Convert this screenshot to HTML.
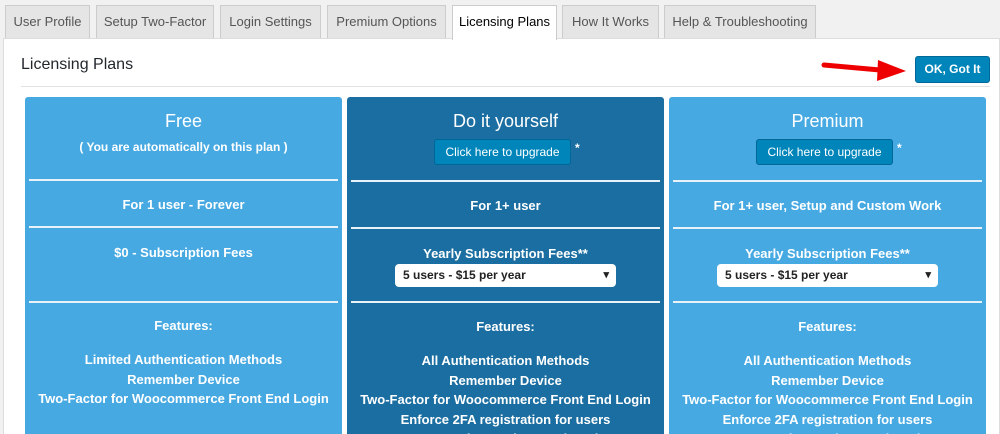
<!DOCTYPE html>
<html><head><meta charset="utf-8"><style>
*{margin:0;padding:0;box-sizing:border-box}
html,body{width:1000px;height:434px;overflow:hidden}
body{background:#f1f1f1;font-family:"Liberation Sans",sans-serif;position:relative}
.tab{position:absolute;top:5px;height:33px;background:#e5e5e5;border:1px solid #ccc;border-bottom:none;font-size:13px;color:#555;line-height:31px;text-align:center}
.tab.a{background:#fff;color:#000;height:35px;z-index:2}
.box{position:absolute;left:3px;top:38px;width:997px;height:396px;background:#fff;border:1px solid #ddd;border-bottom:none}
.t{position:absolute;left:21px;top:56px;font-size:16px;color:#23282d}
.hr{position:absolute;left:21px;top:86px;width:969px;height:1px;background:#e1e1e1}
.btn{position:absolute;background:#0085ba;border:1px solid #006799;color:#fff;font-weight:bold;font-size:12px;text-align:center;border-radius:3px}
.col{position:absolute;top:97px;width:317px;height:337px;border-radius:3px 3px 0 0;color:#fff;font-weight:bold;font-size:13px}
.l{background:#47a9e2}.d{background:#1b6ea1}
.c{position:absolute;left:0;width:100%;text-align:center}
.ln{position:absolute;left:4px;right:4px;height:2px;background:#e8f2f8}
.h{font-size:18px;font-weight:normal}
.sel{position:absolute;left:48px;width:221px;height:23px;background:#fff;border-radius:4px;color:#222;font-size:12px;line-height:23px;padding-left:8px;text-align:left}
.sel:after{content:"▾";position:absolute;right:7px;font-size:11px}
.up{position:absolute;left:87px;top:42px;width:137px;height:26px;line-height:24px;font-weight:normal}
.star{position:absolute;left:228px;top:44px;font-size:12px}
</style></head><body>
<div class="tab" style="left:5px;width:85px">User Profile</div>
<div class="tab" style="left:96px;width:118px">Setup Two-Factor</div>
<div class="tab" style="left:220px;width:101px">Login Settings</div>
<div class="tab" style="left:327px;width:119px">Premium Options</div>
<div class="tab a" style="left:452px;width:105px">Licensing Plans</div>
<div class="tab" style="left:562px;width:97px">How It Works</div>
<div class="tab" style="left:664px;width:152px">Help &amp; Troubleshooting</div>
<div class="box"></div>
<div class="t">Licensing Plans</div>
<div class="hr"></div>
<svg style="position:absolute;left:820px;top:56px" width="90" height="26"><path d="M4 9 L60 14" stroke="#e00" stroke-width="5" stroke-linecap="round"/><path d="M58 4 L86 15 L57 25 Z" fill="#e00"/></svg>
<div class="btn" style="left:915px;top:56px;width:75px;height:27px;line-height:25px">OK, Got It</div>

<div class="col l" style="left:25px">
<div class="c h" style="top:14px">Free</div>
<div class="c" style="top:43px;font-size:12px">( You are automatically on this plan )</div>
<div class="ln" style="top:82px"></div>
<div class="c" style="top:100px">For 1 user - Forever</div>
<div class="ln" style="top:129px"></div>
<div class="c" style="top:148px">$0 - Subscription Fees</div>
<div class="ln" style="top:204px"></div>
<div class="c" style="top:221px">Features:</div>
<div class="c" style="top:253px;line-height:19.5px">Limited Authentication Methods<br>Remember Device<br>Two-Factor for Woocommerce Front End Login</div>
</div>

<div class="col d" style="left:347px">
<div class="c h" style="top:14px">Do it yourself</div>
<div class="btn up">Click here to upgrade</div><div class="star">*</div>
<div class="ln" style="top:83px"></div>
<div class="c" style="top:101px">For 1+ user</div>
<div class="ln" style="top:130px"></div>
<div class="c" style="top:149px">Yearly Subscription Fees**</div>
<div class="sel" style="top:167px">5 users - $15 per year</div>
<div class="ln" style="top:204px"></div>
<div class="c" style="top:222px">Features:</div>
<div class="c" style="top:254px;line-height:19.5px">All Authentication Methods<br>Remember Device<br>Two-Factor for Woocommerce Front End Login<br>Enforce 2FA registration for users<br>Manage Backup and Trusted Devices</div>
</div>

<div class="col l" style="left:669px">
<div class="c h" style="top:14px">Premium</div>
<div class="btn up">Click here to upgrade</div><div class="star">*</div>
<div class="ln" style="top:83px"></div>
<div class="c" style="top:101px">For 1+ user, Setup and Custom Work</div>
<div class="ln" style="top:130px"></div>
<div class="c" style="top:149px">Yearly Subscription Fees**</div>
<div class="sel" style="top:167px">5 users - $15 per year</div>
<div class="ln" style="top:204px"></div>
<div class="c" style="top:222px">Features:</div>
<div class="c" style="top:254px;line-height:19.5px">All Authentication Methods<br>Remember Device<br>Two-Factor for Woocommerce Front End Login<br>Enforce 2FA registration for users<br>Manage Backup and Trusted Devices</div>
</div>
</body></html>
